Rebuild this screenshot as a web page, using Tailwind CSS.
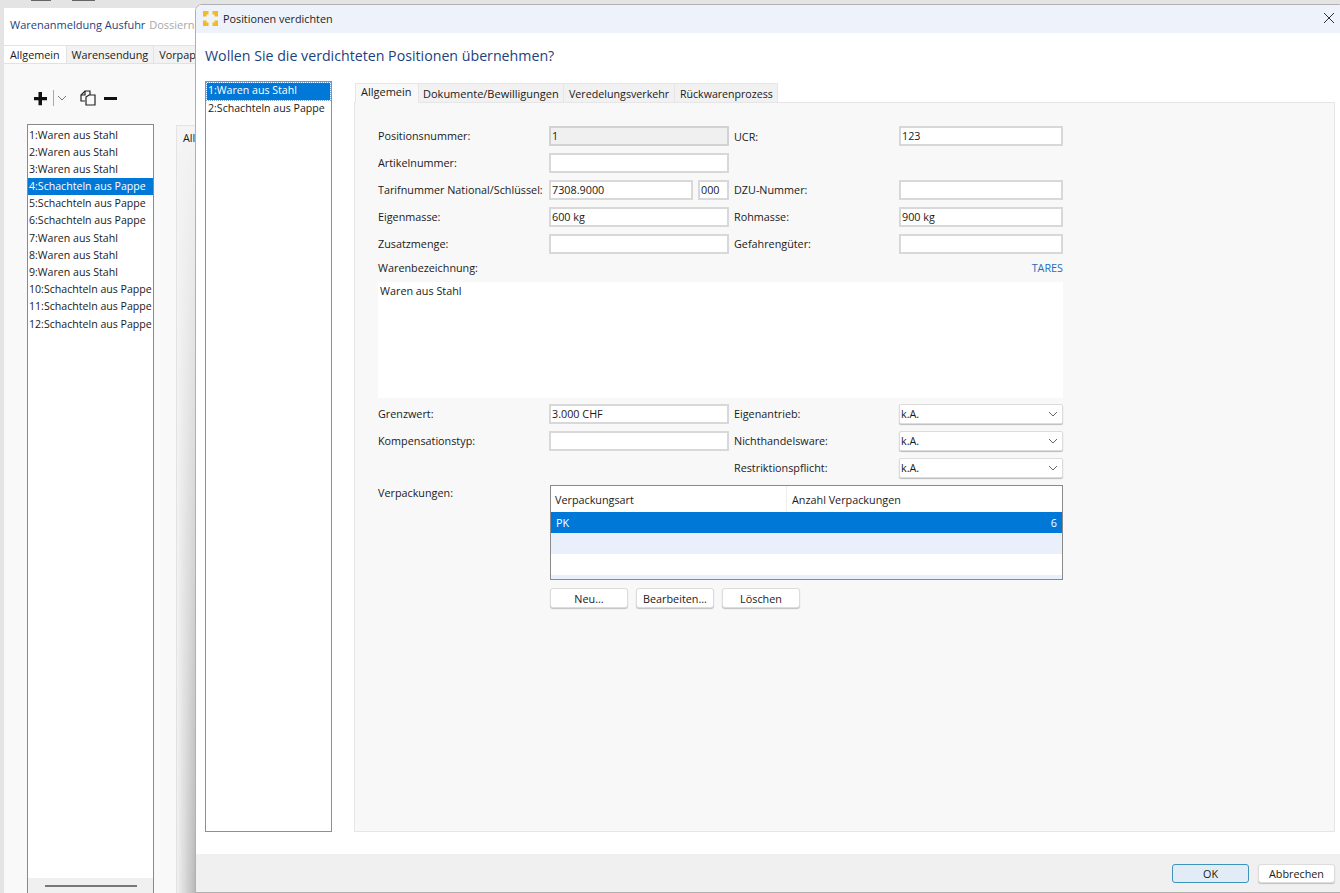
<!DOCTYPE html>
<html lang="de">
<head>
    <meta charset="UTF-8">
    <title>Positionen verdichten</title>
    <script src="https://cdn.jsdelivr.net/npm/@tailwindcss/browser@4"></script>
</head>
<body class="bg-[#e4e4e4] text-[#1a1a1a] h-[893px] w-[1340px] overflow-hidden relative font-['Open_Sans','Noto_Sans',sans-serif] text-[10.8px] leading-[17px]">

    <!-- Fensterleiste oben -->
    <div class="absolute left-[31px] top-0 w-[20px] h-px bg-[#666]"></div>
    <div class="absolute left-[72px] top-0 w-[23px] h-px bg-[#666]"></div>

    <!-- Hauptfenster im Hintergrund -->
    <div class="absolute left-[4px] top-[8px] w-[192px] h-[885px] bg-[#f9f9f9] overflow-hidden">
        <div class="h-[37px] bg-white pl-[6px] pt-[8px] text-[11px] whitespace-nowrap">
            <span class="text-[#1f3f7f]">Warenanmeldung Ausfuhr</span>
            <span class="text-[#a8a8a8] ml-px">Dossiernu</span>
        </div>
        <div class="flex h-[19px] border-y border-[#e2e2e2] bg-[#f2f2f2] whitespace-nowrap">
            <div class="px-[6px] bg-white">Allgemein</div>
            <div class="px-[5px] border-l border-[#e2e2e2]">Warensendung</div>
            <div class="px-[5px] border-l border-[#e2e2e2]">Vorpap</div>
        </div>
        <div class="flex items-center h-[30px] mt-[19px] ml-[29px]">
            <svg width="15" height="15" viewBox="0 0 15 15"><path d="M5.5 1h3.5v5h5v3.2H9v5H5.5v-5H1V6h4.5z" fill="#111"/></svg>
            <div class="w-px h-[16px] bg-[#aaa] ml-[5px]"></div>
            <svg width="12" height="12" viewBox="0 0 12 12" fill="none" stroke="#777" class="ml-[2px]"><path d="M2 4l4 4 4-4"/></svg>
            <svg width="18" height="18" viewBox="0 0 18 18" fill="none" stroke="#222" stroke-width="1.2" class="ml-[11px]"><path d="M6 12H2V6l4-4h5v4"/><path d="M7 8l3-2h6v10H7z"/><path d="M6 2v4H2"/></svg>
            <svg width="15" height="15" viewBox="0 0 15 15" class="ml-[6px]"><path d="M1 6h13v3H1z" fill="#111"/></svg>
        </div>
        <div class="flex">
            <div class="shrink-0 ml-[23px] mt-[11px] w-[127px] h-[780px] border border-[#8a8a8a] bg-white relative whitespace-nowrap overflow-hidden text-[10.6px] pt-[1.5px]">
                <div class="px-px h-[17.2px]">1:Waren aus Stahl</div>
                <div class="px-px h-[17.2px]">2:Waren aus Stahl</div>
                <div class="px-px h-[17.2px]">3:Waren aus Stahl</div>
                <div class="px-px h-[17.2px] bg-[#0078d7] text-white">4:Schachteln aus Pappe</div>
                <div class="px-px h-[17.2px]">5:Schachteln aus Pappe</div>
                <div class="px-px h-[17.2px]">6:Schachteln aus Pappe</div>
                <div class="px-px h-[17.2px]">7:Waren aus Stahl</div>
                <div class="px-px h-[17.2px]">8:Waren aus Stahl</div>
                <div class="px-px h-[17.2px]">9:Waren aus Stahl</div>
                <div class="px-px h-[17.2px]">10:Schachteln aus Pappe</div>
                <div class="px-px h-[17.2px]">11:Schachteln aus Pappe</div>
                <div class="px-px h-[17.2px]">12:Schachteln aus Pappe</div>
                <div class="absolute left-0 right-0 top-[753px] h-[16px] bg-[#f0f0f0] flex items-center justify-center">
                    <div class="w-[92px] h-[2px] bg-[#777]"></div>
                </div>
            </div>
            <div class="shrink-0 ml-[22px] mt-[12px] w-[40px] h-[790px] border border-[#e4e4e4] bg-[#f4f4f4] pl-[6px] pt-[3px]">All</div>
        </div>
    </div>

    <!-- Schatten des Dialogs -->
    <div class="absolute left-[176px] top-[124px] w-[20px] h-[769px] bg-gradient-to-r from-transparent to-black/25 [mask-image:linear-gradient(to_bottom,transparent,black)]"></div>

    <!-- Dialog -->
    <div class="absolute left-[195px] top-[4px] w-[1150px] h-[889px] bg-white border border-[#b0b0b0] rounded-t-[7px] flex flex-col overflow-hidden">
        <div class="h-[28px] shrink-0 bg-[#eef2fa] flex items-center pl-[7px] pr-[9px] pb-[2px]">
            <svg width="15" height="15" viewBox="0 0 15 15" fill="#f5b922">
                <path d="M0 0h5.5v3.5H3.5v2H0zM9.5 0H15v5.5h-3.5v-2h-2zM0 9.5h3.5v2h2V15H0zM11.500 9.500H15V15H9.500v-3.500h2z"/>
            </svg>
            <span class="ml-[5px] text-[#222]">Positionen verdichten</span>
            <svg width="12" height="12" viewBox="0 0 12 12" fill="none" stroke="#333" class="ml-auto"><path d="M1 1l10 10M11 1L1 11"/></svg>
        </div>

        <div class="flex-1 min-h-0 pl-[9px]">
            <h1 class="text-[14.2px] leading-[22px] text-[#1c3f80] mt-[12px] whitespace-nowrap">Wollen Sie die verdichteten Positionen übernehmen?</h1>
            <div class="flex mt-[14px]">
                <!-- Positionsliste -->
                <div class="w-[127px] h-[751px] border border-[#8f8f8f] p-px whitespace-nowrap text-[10.6px]">
                    <div class="h-[17px] px-px leading-[15px] bg-[#0078d7] text-white outline-1 outline-dotted outline-[#7aa7d6]">1:Waren aus Stahl</div>
                    <div class="h-[17px] px-px leading-[16px]">2:Schachteln aus Pappe</div>
                </div>

                <div class="ml-[22px] w-[981px]">
                    <!-- Tabs -->
                    <div class="flex h-[21px] pl-px items-end whitespace-nowrap">
                        <div class="w-[64px] h-[20px] bg-[#f8f8f8] border-t border-x border-[#e6e6e6] pl-[5px] leading-[16px] text-[11px] relative z-10 -mb-px">Allgemein</div>
                        <div class="w-[145px] h-[19px] bg-[#f1f1f1] border-t border-r border-[#e6e6e6] pl-[4px] leading-[20px] text-[11px]">Dokumente/Bewilligungen</div>
                        <div class="w-[111px] h-[19px] bg-[#f1f1f1] border-t border-r border-[#e6e6e6] pl-[5px] leading-[20px] text-[10.7px]">Veredelungsverkehr</div>
                        <div class="w-[103px] h-[19px] bg-[#f1f1f1] border-t border-r border-[#e6e6e6] pl-[5px] leading-[20px] text-[10.6px]">Rückwarenprozess</div>
                    </div>

                    <!-- Formular -->
                    <div class="h-[730px] border border-[#e6e6e6] bg-[#f8f8f8] pl-[23px] pt-[23px] whitespace-nowrap">
                        <div class="grid grid-cols-[171px_180px_170px_164px] gap-y-[7px] auto-rows-[20px] items-center">
                            <div class="-mt-[1px]">Positionsnummer:</div>
                            <div class="h-[20px] border-2 border-[#d2d2d2] bg-[#f0f0f0] pl-px leading-[16px]">1</div>
                            <div class="pl-[5px]">UCR:</div>
                            <div class="h-[20px] border-2 border-[#d8d8d8] bg-white pl-px leading-[16px]">123</div>

                            <div class="-mt-[1px]">Artikelnummer:</div>
                            <div class="h-[20px] border-2 border-[#d8d8d8] bg-white"></div>
                            <div class="col-span-2"></div>

                            <div class="-mt-[1px]">Tarifnummer National/Schlüssel:</div>
                            <div class="flex gap-[5px]">
                                <div class="h-[20px] w-[144px] border-2 border-[#d8d8d8] bg-white pl-px leading-[16px]">7308.9000</div>
                                <div class="h-[20px] w-[31px] border-2 border-[#d8d8d8] bg-white pl-px leading-[16px]">000</div>
                            </div>
                            <div class="pl-[5px] -mt-[1px]">DZU-Nummer:</div>
                            <div class="h-[20px] border-2 border-[#d8d8d8] bg-white"></div>

                            <div class="-mt-[1px]">Eigenmasse:</div>
                            <div class="h-[20px] border-2 border-[#d8d8d8] bg-white pl-px leading-[16px]">600 kg</div>
                            <div class="pl-[5px] -mt-[1px]">Rohmasse:</div>
                            <div class="h-[20px] border-2 border-[#d8d8d8] bg-white pl-px leading-[16px]">900 kg</div>

                            <div class="-mt-[1px]">Zusatzmenge:</div>
                            <div class="h-[20px] border-2 border-[#d8d8d8] bg-white"></div>
                            <div class="pl-[5px] -mt-[1px]">Gefahrengüter:</div>
                            <div class="h-[20px] border-2 border-[#d8d8d8] bg-white"></div>
                        </div>

                        <div class="flex justify-between w-[685px] mt-[5px] h-[23px]">
                            <span>Warenbezeichnung:</span>
                            <span class="text-[#1e6fb8]">TARES</span>
                        </div>
                        <div class="w-[685px] h-[116px] bg-white pl-[2px]">Waren aus Stahl</div>

                        <div class="grid grid-cols-[171px_180px_170px_164px] gap-y-[7px] auto-rows-[20px] items-center mt-[6px]">
                            <div class="-mt-[1px]">Grenzwert:</div>
                            <div class="h-[20px] border-2 border-[#d8d8d8] bg-white pl-px leading-[16px]">3.000 CHF</div>
                            <div class="pl-[5px] -mt-[1px]">Eigenantrieb:</div>
                            <div class="h-[20px] border border-[#dcdcdc] shadow-[0_1px_1px_#bbb] rounded-[2px] bg-white pl-px leading-[18px] flex justify-between items-center pr-[4px]">k.A.
                                <svg width="10" height="10" viewBox="0 0 10 10" fill="none" stroke="#666"><path d="M1 3l4 4 4-4"/></svg>
                            </div>

                            <div class="-mt-[1px]">Kompensationstyp:</div>
                            <div class="h-[20px] border-2 border-[#d8d8d8] bg-white"></div>
                            <div class="pl-[5px] -mt-[1px]">Nichthandelsware:</div>
                            <div class="h-[20px] border border-[#dcdcdc] shadow-[0_1px_1px_#bbb] rounded-[2px] bg-white pl-px leading-[18px] flex justify-between items-center pr-[4px]">k.A.
                                <svg width="10" height="10" viewBox="0 0 10 10" fill="none" stroke="#666"><path d="M1 3l4 4 4-4"/></svg>
                            </div>

                            <div class="col-span-2"></div>
                            <div class="pl-[5px] -mt-[1px]">Restriktionspflicht:</div>
                            <div class="h-[20px] border border-[#dcdcdc] shadow-[0_1px_1px_#bbb] rounded-[2px] bg-white pl-px leading-[18px] flex justify-between items-center pr-[4px]">k.A.
                                <svg width="10" height="10" viewBox="0 0 10 10" fill="none" stroke="#666"><path d="M1 3l4 4 4-4"/></svg>
                            </div>
                        </div>

                        <div class="flex mt-[7px]">
                            <div class="w-[172px] -mt-px">Verpackungen:</div>
                            <div>
                                <div class="w-[513px] h-[95px] border border-[#8a8a8a] bg-white">
                                    <div class="flex h-[26px] items-center">
                                        <div class="w-[236px] pl-[4px] h-full leading-[28px] border-r border-[#eeeeee]">Verpackungsart</div>
                                        <div class="pl-[5px] leading-[28px] h-full">Anzahl Verpackungen</div>
                                    </div>
                                    <div class="flex justify-between items-center h-[21px] bg-[#0078d7] text-white px-[5px]"><span>PK</span><span>6</span></div>
                                    <div class="h-[21px] bg-[#e9f0fb]"></div>
                                    <div class="h-[21px] bg-white"></div>
                                    <div class="h-[4px] bg-[#e9f0fb]"></div>
                                </div>
                                <div class="flex gap-[8px] mt-[8px]">
                                    <div class="w-[78px] h-[20px] border border-[#dcdcdc] shadow-[0_1px_1px_#c0c0c0] rounded-[3px] bg-white text-center leading-[19px]">Neu...</div>
                                    <div class="w-[78px] h-[20px] border border-[#dcdcdc] shadow-[0_1px_1px_#c0c0c0] rounded-[3px] bg-white text-center leading-[19px]">Bearbeiten...</div>
                                    <div class="w-[78px] h-[20px] border border-[#dcdcdc] shadow-[0_1px_1px_#c0c0c0] rounded-[3px] bg-white text-center leading-[19px]">Löschen</div>
                                </div>
                            </div>
                        </div>
                    </div>
                </div>
            </div>
        </div>

        <!-- Fußleiste -->
        <div class="h-[38px] shrink-0 bg-[#f0f0f0] flex justify-end gap-[9px] pt-[10px] pr-[9px]">
            <div class="w-[77px] h-[19px] border border-[#3f93b8] rounded-[3px] bg-[#e1ecf7] text-center leading-[18px]">OK</div>
            <div class="w-[77px] h-[19px] border border-[#dcdcdc] shadow-[0_1px_1px_#c0c0c0] rounded-[3px] bg-white text-center leading-[18px]">Abbrechen</div>
        </div>
    </div>
</body>
</html>
